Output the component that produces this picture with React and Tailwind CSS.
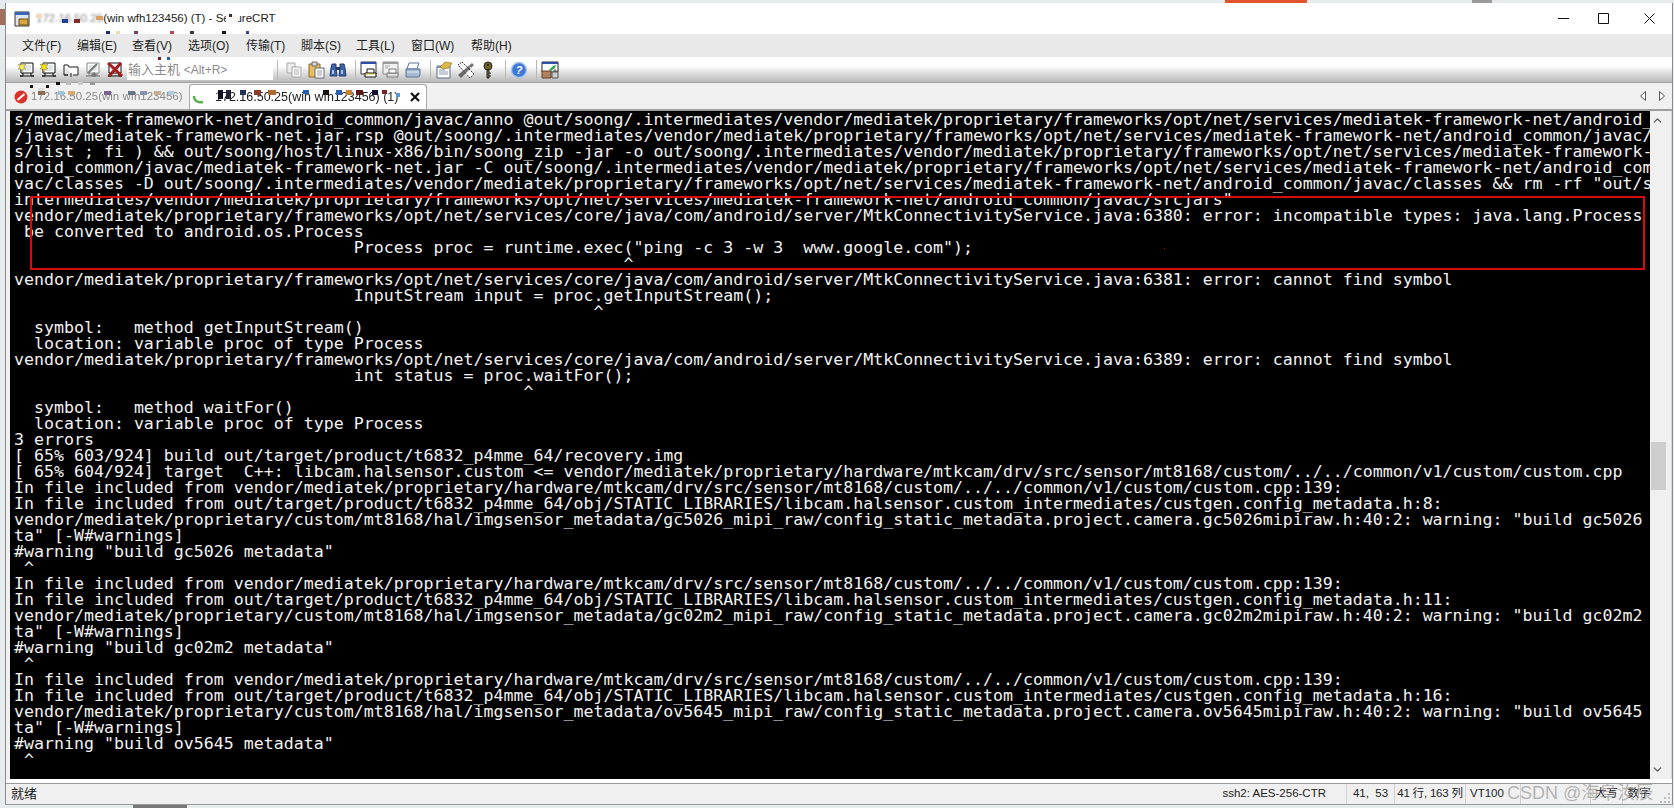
import { ChevronUp, ChevronDown } from "lucide-react";

const gap34 = " ".repeat(34);

const lines = [
  's/mediatek-framework-net/android_common/javac/anno @out/soong/.intermediates/vendor/mediatek/proprietary/frameworks/opt/net/services/mediatek-framework-net/android_',
  "/javac/mediatek-framework-net.jar.rsp @out/soong/.intermediates/vendor/mediatek/proprietary/frameworks/opt/net/services/mediatek-framework-net/android_common/javac/",
  "s/list ; fi ) && out/soong/host/linux-x86/bin/soong_zip -jar -o out/soong/.intermediates/vendor/mediatek/proprietary/frameworks/opt/net/services/mediatek-framework-",
  "droid_common/javac/mediatek-framework-net.jar -C out/soong/.intermediates/vendor/mediatek/proprietary/frameworks/opt/net/services/mediatek-framework-net/android_com",
  'vac/classes -D out/soong/.intermediates/vendor/mediatek/proprietary/frameworks/opt/net/services/mediatek-framework-net/android_common/javac/classes && rm -rf "out/s',
  'intermediates/vendor/mediatek/proprietary/frameworks/opt/net/services/mediatek-framework-net/android_common/javac/srcjars"',
  "vendor/mediatek/proprietary/frameworks/opt/net/services/core/java/com/android/server/MtkConnectivityService.java:6380: error: incompatible types: java.lang.Process",
  " be converted to android.os.Process",
  gap34 + 'Process proc = runtime.exec("ping -c 3 -w 3  www.google.com");',
  " ".repeat(61) + "^",
  "vendor/mediatek/proprietary/frameworks/opt/net/services/core/java/com/android/server/MtkConnectivityService.java:6381: error: cannot find symbol",
  gap34 + "InputStream input = proc.getInputStream();",
  " ".repeat(58) + "^",
  "  symbol:   method getInputStream()",
  "  location: variable proc of type Process",
  "vendor/mediatek/proprietary/frameworks/opt/net/services/core/java/com/android/server/MtkConnectivityService.java:6389: error: cannot find symbol",
  gap34 + "int status = proc.waitFor();",
  " ".repeat(51) + "^",
  "  symbol:   method waitFor()",
  "  location: variable proc of type Process",
  "3 errors",
  "[ 65% 603/924] build out/target/product/t6832_p4mme_64/recovery.img",
  "[ 65% 604/924] target  C++: libcam.halsensor.custom <= vendor/mediatek/proprietary/hardware/mtkcam/drv/src/sensor/mt8168/custom/../../common/v1/custom/custom.cpp",
  "In file included from vendor/mediatek/proprietary/hardware/mtkcam/drv/src/sensor/mt8168/custom/../../common/v1/custom/custom.cpp:139:",
  "In file included from out/target/product/t6832_p4mme_64/obj/STATIC_LIBRARIES/libcam.halsensor.custom_intermediates/custgen.config_metadata.h:8:",
  'vendor/mediatek/proprietary/custom/mt8168/hal/imgsensor_metadata/gc5026_mipi_raw/config_static_metadata.project.camera.gc5026mipiraw.h:40:2: warning: "build gc5026',
  'ta" [-W#warnings]',
  '#warning "build gc5026 metadata"',
  " ^",
  "In file included from vendor/mediatek/proprietary/hardware/mtkcam/drv/src/sensor/mt8168/custom/../../common/v1/custom/custom.cpp:139:",
  "In file included from out/target/product/t6832_p4mme_64/obj/STATIC_LIBRARIES/libcam.halsensor.custom_intermediates/custgen.config_metadata.h:11:",
  'vendor/mediatek/proprietary/custom/mt8168/hal/imgsensor_metadata/gc02m2_mipi_raw/config_static_metadata.project.camera.gc02m2mipiraw.h:40:2: warning: "build gc02m2',
  'ta" [-W#warnings]',
  '#warning "build gc02m2 metadata"',
  " ^",
  "In file included from vendor/mediatek/proprietary/hardware/mtkcam/drv/src/sensor/mt8168/custom/../../common/v1/custom/custom.cpp:139:",
  "In file included from out/target/product/t6832_p4mme_64/obj/STATIC_LIBRARIES/libcam.halsensor.custom_intermediates/custgen.config_metadata.h:16:",
  'vendor/mediatek/proprietary/custom/mt8168/hal/imgsensor_metadata/ov5645_mipi_raw/config_static_metadata.project.camera.ov5645mipiraw.h:40:2: warning: "build ov5645',
  'ta" [-W#warnings]',
  '#warning "build ov5645 metadata"',
  " ^",
];

const menus = [
  ["文件(F)", "w-[55px]"],
  ["编辑(E)", "w-[55px]"],
  ["查看(V)", "w-[56px]"],
  ["选项(O)", "w-[58px]"],
  ["传输(T)", "w-[55px]"],
  ["脚本(S)", "w-[55px]"],
  ["工具(L)", "w-[55px]"],
  ["窗口(W)", "w-[60px]"],
  ["帮助(H)", "w-[60px]"],
];

// blurred-out pixels in the screenshot: [x, y, w, h, colour], page coordinates
const mosaic = [
  [36, 14, 6, 4, "#f3d6c0"], [62, 19, 6, 4, "#1d3f9a"], [74, 19, 6, 4, "#7a2e2e"], [96, 16, 7, 4, "#d9a066"],
  [106, 31, 4, 3, "#1d2f6a"], [116, 31, 4, 3, "#e8dfa8"], [134, 31, 4, 3, "#7a3a6a"], [170, 31, 4, 3, "#b9455a"],
  [190, 31, 4, 3, "#3a3a3a"], [222, 31, 4, 3, "#111111"], [246, 31, 3, 3, "#2e3f9a"],
  [158, 57, 3, 3, "#702020"], [167, 57, 3, 3, "#1f5fa8"], [226, 15, 12, 9, "#f7f7f7"], [229, 14, 3, 3, "#333333"],
  [56, 82, 4, 3, "#111111"], [66, 82, 5, 3, "#bbbbbb"], [78, 82, 5, 3, "#cccccc"], [90, 82, 5, 3, "#999999"],
  [30, 85, 3, 3, "#111111"], [46, 85, 3, 3, "#111111"], [38, 88, 6, 5, "#dddddd"],
  [38, 91, 7, 4, "#8a6d50"], [58, 91, 6, 4, "#9bc6e0"], [68, 91, 7, 4, "#d9a877"], [104, 91, 7, 4, "#7a5f8f"],
  [128, 91, 7, 4, "#667788"], [140, 91, 7, 4, "#8890b0"], [154, 91, 7, 4, "#c9b090"], [168, 91, 6, 4, "#aaccdd"],
  [218, 90, 5, 9, "#111122"], [226, 90, 5, 9, "#222233"], [240, 90, 6, 5, "#223355"], [254, 90, 7, 5, "#8a3b2a"],
  [268, 90, 8, 5, "#b06a30"], [303, 90, 6, 4, "#1f5fa8"], [323, 90, 6, 5, "#111111"], [336, 90, 6, 5, "#2e5fa8"],
  [346, 90, 6, 5, "#c98030"], [356, 90, 7, 5, "#5a1a1a"], [372, 90, 6, 5, "#111133"], [382, 90, 5, 4, "#772222"],
  [396, 93, 4, 4, "#5599dd"],
];

function Box({ children }) {
  return (
    <svg width="18" height="18" viewBox="0 0 18 18" className="shrink-0">
      {children}
    </svg>
  );
}

function Screen({ stroke = "#111", badge }) {
  return (
    <>
      <path d="M3 2h12v10H3z" fill="#fff" stroke={stroke} />
      <path d="M5 12v3H2M13 12v3h3M2 15h14" fill="none" stroke={stroke} />
      <path d="M5 4h8v6H5z" fill="#dfe5ea" />
      {badge}
    </>
  );
}

const Spark = ({ c }) => <path d="M4 1l1 3 3-1-2 3 2 2-3 0-1 4-1-4-3 0 2-2-2-3 3 1z" fill={c} stroke="#555" strokeWidth=".4" />;

function Sep() {
  return <div className="mx-[4px] h-[20px] w-px bg-[#b8b8b8]" />;
}

function Tool({ children }) {
  return <div className="mr-[4px] flex w-[18px] shrink-0 justify-center">{children}</div>;
}

function Toolbar() {
  return (
    <div className="flex h-[26px] shrink-0 items-center border-b border-[#a3a3a3] bg-linear-to-b from-white from-35% to-[#b9b9b9] pl-[12px]">
      <Tool><Box><Screen badge={<Spark c="#f5ee4a" />} /></Box></Tool>
      <Tool><Box><Screen badge={<Spark c="#ffe100" />} /></Box></Tool>
      <Tool>
        <Box>
          <path d="M2 4h4l1 2h9v8h-5M6 14H2z" fill="#fff" stroke="#222" />
          <path d="M2 4v10" stroke="#222" />
          <path d="M9 12v4" stroke="#222" />
        </Box>
      </Tool>
      <Tool>
        <Box>
          <Screen stroke="#888" />
          <path d="M4 12L13 3" stroke="#777" strokeWidth="2" />
          <path d="M6 15l4-4 3 3-2 2z" fill="#777" />
        </Box>
      </Tool>
      <Tool>
        <Box>
          <Screen />
          <path d="M2 2l14 13M15 2L3 15" stroke="#a51c1c" strokeWidth="3" />
        </Box>
      </Tool>
      {/* host input */}
      <div className="-ml-[1px] flex h-[20px] w-[146px] shrink-0 items-center bg-white pl-[1px] text-[13px] text-[#8c8c8c]">
        输入主机&nbsp;<span className="text-[12px]">&lt;Alt+R&gt;</span>
      </div>
      <Sep />
      <div className="w-[3px]" />
      <Tool>
        <Box>
          <path d="M2 2h8v10H2z" fill="#ececec" stroke="#aaa" />
          <path d="M7 6h9v10H7z" fill="#f4f4f4" stroke="#aaa" />
          <path d="M9 9h5M9 11h5M9 13h5" stroke="#bbb" />
        </Box>
      </Tool>
      <Tool>
        <Box>
          <path d="M2 3h11v13H2z" fill="#e7bf62" stroke="#8a6420" />
          <path d="M5 1h5v4H5z" fill="#d8d8d8" stroke="#666" />
          <path d="M8 7h9v10H8z" fill="#fff" stroke="#667" />
          <path d="M10 10h5M10 12h5M10 14h5" stroke="#99a" />
        </Box>
      </Tool>
      <Tool>
        <Box>
          <path d="M3 3h4v4l1 8H1l1-8zM11 3h4l1 4 1 8h-7l1-8z" fill="#3b63a8" stroke="#223a70" />
          <path d="M7 6h4v3H7z" fill="#223a70" />
          <path d="M3 9h2v4H3zM12 9h2v4h-2z" fill="#a9c3e8" />
        </Box>
      </Tool>
      <Sep />
      <Tool>
        <Box>
          <path d="M1 1h15v12H1z" fill="#fff" stroke="#333" />
          <path d="M1 1h15v2H1z" fill="#2b4fa8" />
          <path d="M5 12h11v4H5z" fill="#fff" stroke="#111" />
          <path d="M7 8h7v4H7z" fill="#fff" stroke="#111" />
          <path d="M6 13h9" stroke="#e0c030" />
        </Box>
      </Tool>
      <Tool>
        <Box>
          <path d="M1 1h15v12H1z" fill="#f1f1f1" stroke="#888" />
          <path d="M1 1h15v2H1z" fill="#9a9a9a" />
          <path d="M3 5h5M3 7h3" stroke="#aaa" />
          <path d="M5 12h11v4H5z" fill="#ddd" stroke="#777" />
          <path d="M7 8h7v4H7z" fill="#fff" stroke="#777" />
        </Box>
      </Tool>
      <Tool>
        <Box>
          <path d="M5 2h10l-2 6H3z" fill="#fff" stroke="#5c7599" />
          <path d="M2 8h14v6a2 2 0 0 1-2 2H2z" fill="#a5b9d3" stroke="#5c7599" />
          <path d="M3 11h12" stroke="#e9eef5" />
        </Box>
      </Tool>
      <Sep />
      <Tool>
        <Box>
          <path d="M2 5h13v12H2z" fill="#fff" stroke="#5a6a80" />
          <path d="M2 5h13v2H2z" fill="#7d96b8" />
          <path d="M4 9h6M4 11h9M4 13h9" stroke="#8a9ab0" />
          <path d="M5 6l5-5 7 1-3 5-6 1z" fill="#dcb84e" stroke="#8a6a20" strokeWidth=".6" />
        </Box>
      </Tool>
      <Tool>
        <Box>
          <path d="M1 4l4-3 12 12-4 4z" fill="#fff" stroke="#222" strokeDasharray="1.5 1" />
          <path d="M15 2l2 2L4 17l-3-3z" fill="#444" fillOpacity=".75" />
          <path d="M6 5l1 1M11 10l1 1M9 13l1 1M13 6l1 1" stroke="#fff" />
        </Box>
      </Tool>
      <Tool>
        <Box>
          <circle cx="9" cy="5" r="4" fill="#6f6320" stroke="#222" />
          <circle cx="9" cy="4" r="1" fill="#111" />
          <path d="M8 9h2v8H8zM10 12h2M10 15h2" stroke="#222" fill="#7a6c22" />
        </Box>
      </Tool>
      <Sep />
      <Tool>
        <svg width="18" height="18" viewBox="0 0 18 18">
          <circle cx="9" cy="9" r="7.5" fill="#3e78d8" stroke="#a9c4ee" strokeWidth="1.4" />
          <text x="9" y="13" textAnchor="middle" fontSize="11" fontWeight="700" fontStyle="italic" fill="#fff" fontFamily="Liberation Sans">?</text>
        </svg>
      </Tool>
      <Sep />
      <Tool>
        <Box>
          <path d="M1 1h16v10H1z" fill="#fff" stroke="#222" />
          <path d="M1 1h16v2H1z" fill="#2b4fa8" />
          <path d="M8 9l4-4 3-1-1 3-4 3z" fill="#2fa84a" />
          <path d="M1 10h9v7H1z" fill="#b0805a" stroke="#5e3f28" />
          <path d="M11 11h6v6h-6z" fill="#ccc" stroke="#555" />
          <path d="M13 11V9h2v2" fill="none" stroke="#555" />
        </Box>
      </Tool>
    </div>
  );
}

function Tabs() {
  return (
    <div className="flex h-[26px] shrink-0 items-end bg-[#f0f0f0] pl-[3px]">
      <div className="flex h-[25px] w-[180px] items-center pl-[5px] text-[11.5px] text-[#8a8a8a]">
        <svg width="14" height="14" viewBox="0 0 14 14" className="mr-[3px] shrink-0">
          <circle cx="7" cy="7" r="6.5" fill="#d8332b" />
          <path d="M3.5 10L10.500 4" stroke="#fff" strokeWidth="2" />
        </svg>
        <span className="whitespace-nowrap blur-[0.7px]">172.16.50.25(win wfh123456)</span>
      </div>
      <div className="flex h-[25px] w-[238px] items-center rounded-t-[3px] border border-b-0 border-[#a9a9a9] bg-white pl-[2px] text-[12.5px] text-[#222]">
        <svg width="14" height="14" viewBox="0 0 14 14" className="shrink-0">
          <path d="M2 6c0 5 4 7 9 6" fill="none" stroke="#58b04a" strokeWidth="2.4" />
        </svg>
        <span className="ml-[9px] whitespace-nowrap blur-[0.7px]">172.16.50.25(win wfh123456) (1)</span>
        <svg width="10" height="10" viewBox="0 0 10 10" className="ml-auto mr-[6px] shrink-0">
          <path d="M1 1l8 8M9 1l-8 8" stroke="#111" strokeWidth="2.2" />
        </svg>
      </div>
      <div className="ml-auto flex h-full items-center gap-[13px] pr-[7px]">
        <svg width="6" height="10" viewBox="0 0 6 10"><path d="M5.5.5v9L.5 5z" fill="#fff" stroke="#555" /></svg>
        <svg width="6" height="10" viewBox="0 0 6 10"><path d="M.5.5v9l5-4.500z" fill="#fff" stroke="#555" /></svg>
      </div>
    </div>
  );
}

function Terminal() {
  return (
    <div className="flex min-h-0 flex-1 border-t-2 border-[#9e9e9e] bg-[#f0f0f0] pl-[4px]">
      <div className="min-w-0 flex-1 overflow-hidden bg-black pt-px pl-[4px] font-['DejaVu_Sans_Mono',monospace] text-[16.6px] leading-[16px] text-[#f2f2f2]">
        {lines.map((l, i) => (
          <div key={i} className="h-[16px] whitespace-pre">{l}</div>
        ))}
      </div>
      <div className="flex w-[22px] shrink-0 flex-col border-r border-[#d8d8d8] pr-[6px]">
        <div className="flex h-[19px] items-center justify-center text-[#555]"><ChevronUp size={13} strokeWidth={2.4} /></div>
        <div className="relative flex-1">
          <div className="absolute top-[312px] left-px h-[48px] w-[15px] bg-[#cdcdcd]" />
        </div>
        <div className="flex h-[19px] items-center justify-center text-[#555]"><ChevronDown size={13} strokeWidth={2.4} /></div>
      </div>
    </div>
  );
}

function StatusBar() {
  return (
    <div className="mt-[4px] flex h-[22px] shrink-0 items-center border-y border-[#9a9a9a] bg-[#f0f0f0] text-[11.5px] text-[#222]">
      <span className="pl-[5px] text-[13px]">就绪</span>
      <span className="ml-auto flex h-full w-[118px] items-center justify-end border-r border-[#d0d0d0] pr-[20px] whitespace-nowrap">ssh2: AES-256-CTR</span>
      <span className="flex h-full w-[48px] items-center justify-center border-r border-[#d0d0d0] whitespace-pre">41,  53</span>
      <span className="flex h-full w-[71px] items-center justify-center border-r border-[#d0d0d0] tracking-[-0.2px] whitespace-nowrap">41 行, 163 列</span>
      <span className="flex h-full w-[55px] items-center border-r border-[#d0d0d0] pl-[4px]">VT100</span>
      <span className="h-full w-[70px] border-r border-[#d0d0d0]" />
      <span className="flex h-full w-[32px] items-center justify-center border-r border-[#d0d0d0]">大写</span>
      <span className="flex h-full w-[32px] items-center justify-center">数字</span>
      <svg width="17" height="14" viewBox="0 0 17 14" className="self-end">
        <path d="M13 3h2v2h-2zM9 7h2v2H9zM13 7h2v2h-2zM5 11h2v2H5zM9 11h2v2H9zM13 11h2v2h-2z" fill="#bdbdbd" />
      </svg>
    </div>
  );
}

export default function App() {
  return (
    <div className="relative h-[808px] w-[1674px] overflow-hidden bg-[#e6ebee] pt-[3px] pl-[5px] font-['Liberation_Sans','Noto_Sans_CJK_SC',sans-serif]">
      {/* bits of the desktop behind the window */}
      <div className="absolute top-0 left-[1225px] h-[3px] w-[82px] bg-[#e2522b]" />
      <div className="absolute top-0 left-[1472px] h-[3px] w-[20px] bg-[#9a9a9a]" />
      <div className="absolute top-[9px] left-0 h-[16px] w-[5px] bg-[#a0705a]" />
      <div className="absolute bottom-0 left-[133px] h-[3px] w-[54px] bg-[#777]" />

      <div className="flex h-[802px] w-[1668px] flex-col border-x border-[#8a8a8a] bg-white">
        {/* title bar */}
        <div className="flex h-[31px] shrink-0 items-center bg-white">
          <svg width="16" height="16" viewBox="0 0 16 16" className="ml-[8px] shrink-0">
            <path d="M1 1h14v14H1z" fill="#dfe7f2" stroke="#333" />
            <path d="M1 1h14v3H1z" fill="#3a66b8" />
            <path d="M5 8h9v6H5z" fill="#d9a441" stroke="#6a4a10" />
          </svg>
          <span className="ml-[6px] whitespace-nowrap text-[11.5px] text-[#222]">
            <span className="text-[#8a8a8a] blur-[0.8px]">172.16.50.25</span>(win wfh123456) (T) - SecureCRT
          </span>
          <div className="ml-auto flex items-center pr-[17px]">
            <svg width="11" height="11" viewBox="0 0 11 11" className="mr-[29px]"><path d="M0 5.500h11" stroke="#111" /></svg>
            <svg width="11" height="11" viewBox="0 0 11 11" className="mr-[35px]"><path d="M.5.5h10v10H.5z" fill="none" stroke="#111" /></svg>
            <svg width="11" height="11" viewBox="0 0 11 11"><path d="M.5.5l10 10M10.500.5l-10 10" stroke="#111" /></svg>
          </div>
        </div>
        {/* menu bar */}
        <div className="flex h-[23px] shrink-0 items-center bg-[#e9e9e9] pl-[16px] text-[12px] text-[#222]">
          {menus.map(([label, w]) => (
            <span key={label} className={`whitespace-nowrap ${w}`}>{label}</span>
          ))}
        </div>
        <Toolbar />
        <Tabs />
        <Terminal />
        <StatusBar />
      </div>

      {/* red annotation box */}
      <div className="absolute top-[196px] left-[30px] h-[74px] w-[1615px] border-2 border-[#d90a0a]" />
      <div className="absolute top-[248px] left-[1164px] h-px w-px bg-[#d90a0a]" />

      {/* watermark */}
      <span className="absolute top-[780px] left-[1507px] whitespace-nowrap text-[18px] text-[#888888]/60">CSDN @海阜汝辰</span>

      {mosaic.map(([x, y, w, h, c], i) => (
        <span key={i} className="absolute" style={{ left: x, top: y, width: w, height: h, background: c }} />
      ))}
    </div>
  );
}
